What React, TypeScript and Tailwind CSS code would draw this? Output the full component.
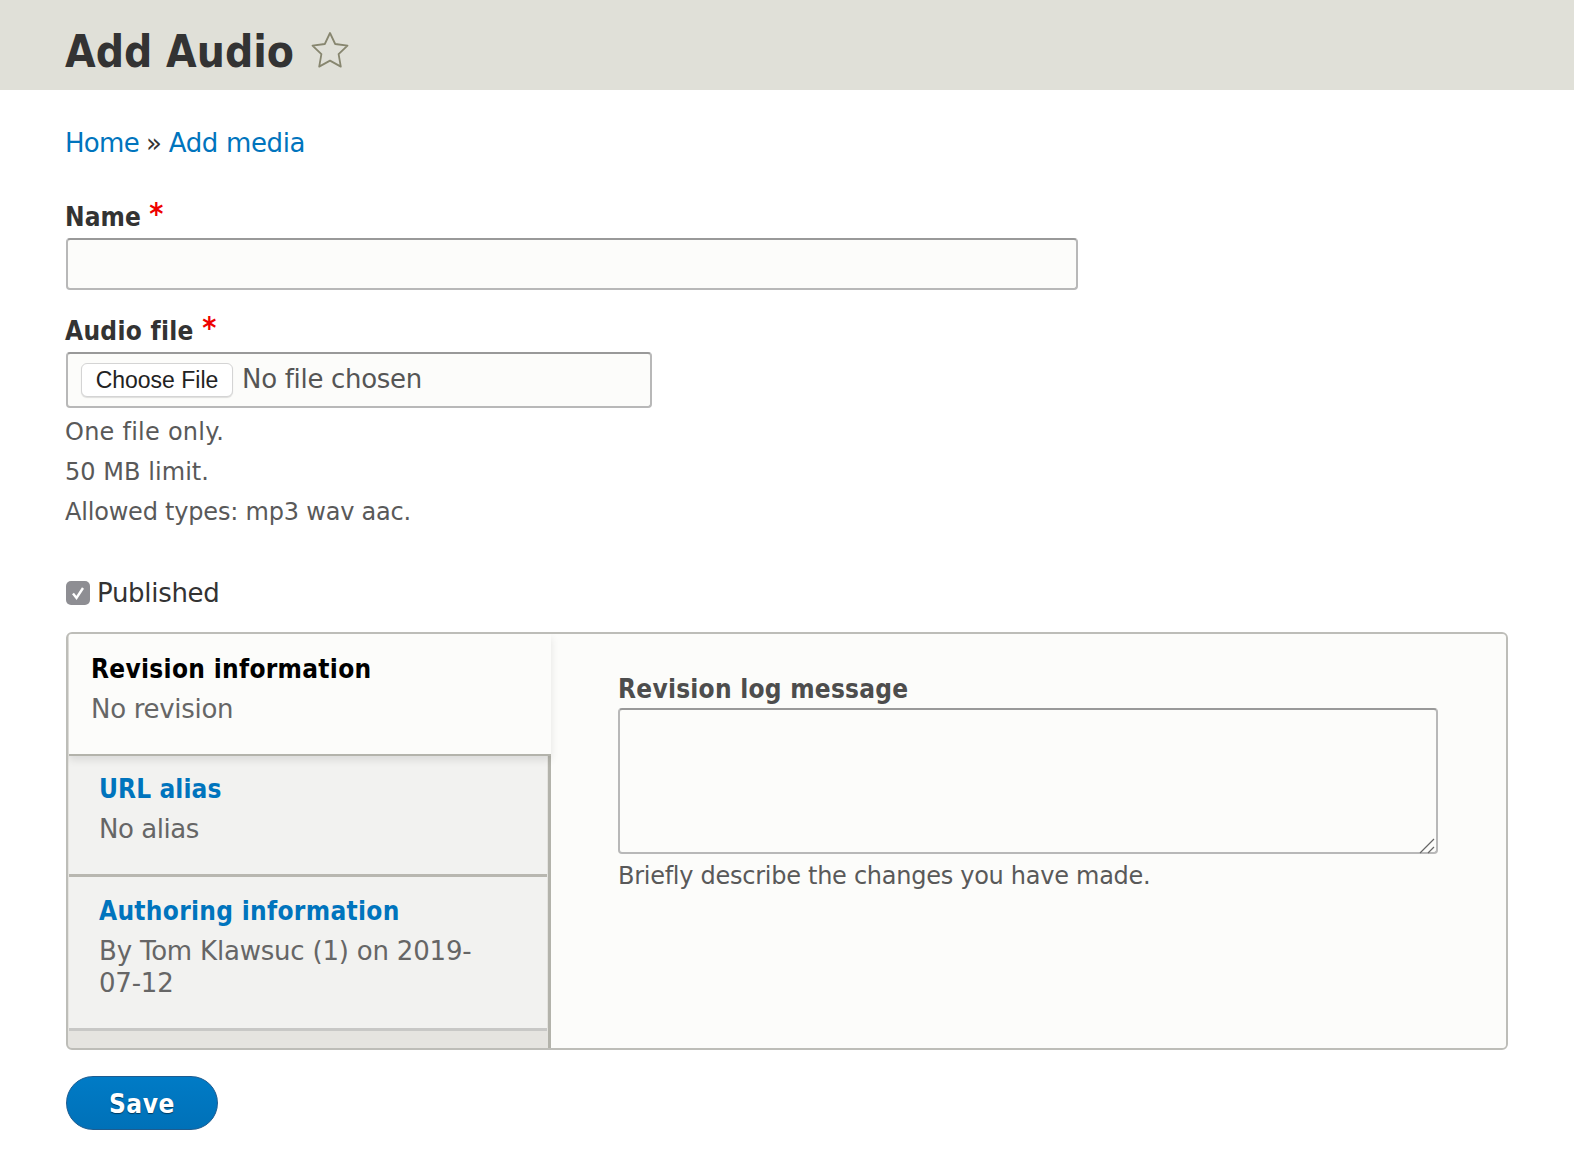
import React from "react";

function Tab({ title, summary, bottom, titleClass, summaryClass }: { title: string; summary: string; bottom: string; titleClass: string; summaryClass: string }) {
  return (
    <div className={`ml-[1px] w-[478px] border-b-[3px] pl-[30px] pr-[40px] bg-[#f2f2f0] ${bottom}`}>
      <a className={`block text-[26px] leading-[32px] font-bold [font-stretch:condensed] text-[#0074bd] ${titleClass}`}>{title}</a>
      <div className={`mt-[8px] text-[26px] leading-[32px] text-[#666666] ${summaryClass}`}>{summary}</div>
    </div>
  );
}

export default function App() {
  return (
    <div className="min-h-[1169px] bg-white font-['DejaVu_Sans','Liberation_Sans',sans-serif] text-[#333333] tracking-[-0.2px]">
      <header className="flex h-[90px] items-center bg-[#e0e0d8] pl-[65px]">
        <h1 className="mt-[13px] text-[44px] leading-[50px] font-bold tracking-[0px] [font-stretch:condensed] text-[#333333]">Add Audio</h1>
        <svg className="ml-[17px] mt-[10px]" width="38" height="38" viewBox="0 0 38 38" fill="none">
          <path d="M19 2 L24.2 13 L36.5 14.6 L27.6 23.2 L29.8 35.6 L19 29.6 L8.2 35.6 L10.4 23.2 L1.5 14.6 L13.8 13 Z" stroke="#87866f" strokeWidth="1.8" strokeLinejoin="round" />
        </svg>
      </header>

      <main className="px-[65px]">
        <nav className="mt-[37px] text-[26px] leading-[32px]">
          <a className="tracking-[-0.7px] text-[#0074bd]">Home</a>
          <span className="mx-[7px]">»</span>
          <a className="tracking-[-0.35px] text-[#0074bd]">Add media</a>
        </nav>

        <label className="mt-[42px] block text-[26px] leading-[32px] font-bold tracking-[0.1px] [font-stretch:condensed]">
          Name <span className="relative top-[-2px] text-[30px] leading-[20px] text-[#ee0000]">*</span>
        </label>
        <div className="ml-[1px] mt-[5px] h-[52px] w-[1012px] rounded-[4px] border-2 border-[#b8b8b8] border-t-[#999999] bg-[#fcfcfa]" />

        <label className="mt-[25px] block text-[26px] leading-[32px] font-bold tracking-[0.3px] [font-stretch:condensed]">
          Audio file <span className="relative top-[-2px] text-[30px] leading-[20px] text-[#ee0000]">*</span>
        </label>
        <div className="ml-[1px] mt-[5px] flex h-[56px] w-[586px] items-center rounded-[4px] border-2 border-[#b8b8b8] border-t-[#999999] bg-[#fcfcfa] pl-[13px]">
          <button className="h-[34px] w-[152px] rounded-[6px] border border-[#d4d4d4] bg-white text-center font-['Liberation_Sans',sans-serif] text-[23px] leading-[32px] tracking-[0px] text-[#222222] shadow-[0_1px_1px_rgba(0,0,0,0.12)]">
            Choose File
          </button>
          <span className="ml-[9px] mt-[-2px] text-[26px] leading-[32px] tracking-[-0.3px] text-[#555555]">No file chosen</span>
        </div>
        <div className="mt-[4px] text-[24px] leading-[40px] text-[#595959]">
          <div className="tracking-[0.25px]">One file only.</div>
          <div className="tracking-[0.05px]">50 MB limit.</div>
          <div>Allowed types: mp3 wav aac.</div>
        </div>

        <div className="mt-[41px] flex h-[40px] items-center">
          <span className="ml-[1px] flex h-[24px] w-[24px] items-center justify-center rounded-[5px] bg-[#8e8e93]">
            <svg width="16" height="16" viewBox="0 0 16 16" fill="none">
              <path d="M3 8.5 L6.5 13 L13 3" stroke="white" strokeWidth="2.4" />
            </svg>
          </span>
          <span className="ml-[7px] text-[26px] leading-[32px] tracking-[-0.3px]">Published</span>
        </div>

        <div className="ml-[1px] mt-[19px] flex h-[418px] w-[1442px] overflow-hidden rounded-[6px] border-2 border-[#bdbdb8] bg-[#e5e4e0]">
          <div className="relative w-[480px] shrink-0">
            <div className="relative z-10 ml-[1px] h-[122px] w-[482px] border-b-[2px] border-[#b3b3ab] bg-[#fcfcfa] pl-[22px] pt-[19px] shadow-[0_4px_8px_rgba(0,0,0,0.1)]">
              <div className="text-[26px] leading-[32px] font-bold tracking-[0.3px] [font-stretch:condensed] text-black">Revision information</div>
              <div className="mt-[8px] text-[26px] leading-[32px] tracking-[-0.3px] text-[#666666]">No revision</div>
            </div>
            <Tab title="URL alias" summary="No alias" bottom="h-[121px] pt-[17px] border-[#b8b7b0]" titleClass="tracking-[0.1px]" summaryClass="tracking-[-0.45px]" />
            <Tab title="Authoring information" summary="By Tom Klawsuc (1) on 2019-07-12" bottom="h-[154px] pt-[18px] border-[#c8c8c6]" titleClass="tracking-[0.3px]" summaryClass="" />
          </div>
          <div className="flex-1 border-l-[3px] border-[#b3b3ab] bg-[#fcfcfa] pl-[67px] pt-[39px]">
            <label className="block text-[26px] leading-[32px] font-bold tracking-[0.25px] [font-stretch:condensed] text-[#4d4d4d]">Revision log message</label>
            <div className="relative mt-[3px] h-[146px] w-[820px] rounded-[4px] border-2 border-[#b8b8b8] border-t-[#999999] bg-[#fcfcfa]">
              <svg className="absolute bottom-[-2px] right-[1px]" width="16" height="16" viewBox="0 0 16 16" fill="none">
                <path d="M1 15 L15 1 M9 15 L15 9" stroke="#666666" strokeWidth="1.2" />
              </svg>
            </div>
            <div className="mt-[6px] text-[24px] leading-[32px] tracking-[-0.27px] text-[#595959]">Briefly describe the changes you have made.</div>
          </div>
        </div>

        <button className="ml-[1px] mt-[26px] h-[54px] w-[152px] rounded-[27px] border border-[#1e5c90] bg-gradient-to-b from-[#007bc6] to-[#0071b8] pt-[2px] text-center text-[26px] font-bold tracking-[0.6px] [font-stretch:condensed] text-white [text-shadow:0_1px_1px_rgba(0,0,0,0.5)]">
          Save
        </button>
      </main>
    </div>
  );
}
